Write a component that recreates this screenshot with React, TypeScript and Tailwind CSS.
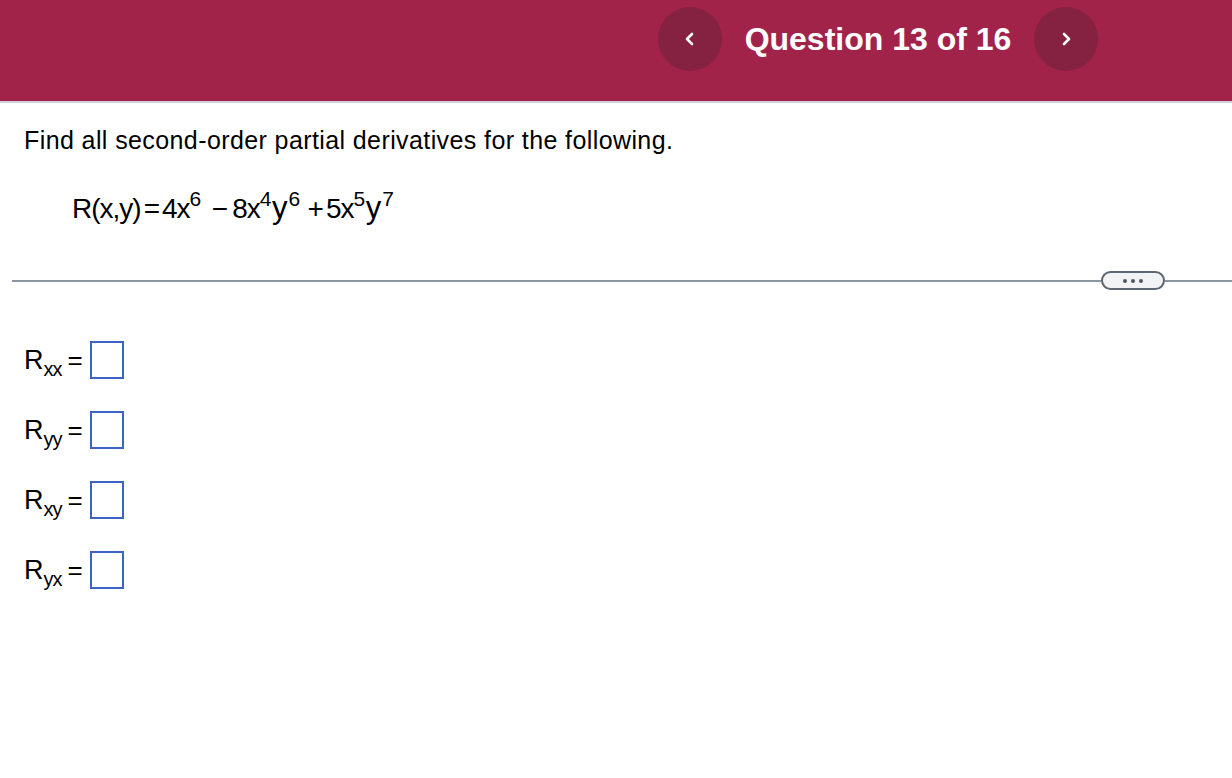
import React from 'react';

const font = { fontFamily: '"Liberation Sans", Arial, sans-serif' };

const rows = [{ sub: 'xx' }, { sub: 'yy' }, { sub: 'xy' }, { sub: 'yx' }];

const Sup: React.FC<{ children: React.ReactNode }> = ({ children }) => (
  <span className="relative -top-[12px] text-[21px] tracking-[-0.5px]">{children}</span>
);

const Y = () => <span className="text-[31px] ml-[1px] mr-[1px] tracking-normal">y</span>;

export default function App() {
  return (
    <div className="min-h-screen w-[1232px] bg-white text-black" style={font}>
      {/* header */}
      <div className="h-[103px] bg-[#a2234a] border-b-2 border-[#ccd1dc] flex items-start justify-end pr-[134px] pt-[7px]">
        <div className="flex items-center">
          <button className="w-[64px] h-[64px] rounded-full bg-[#852141] flex items-center justify-center">
            <svg width="12" height="14" viewBox="0 0 12 14">
              <path d="M8 2 L3 7 L8 12" stroke="white" strokeWidth="2.6" fill="none" strokeLinecap="round" strokeLinejoin="round" />
            </svg>
          </button>
          <div className="w-[312px] text-center text-white font-bold text-[32px] leading-none">Question 13 of 16</div>
          <button className="w-[64px] h-[64px] rounded-full bg-[#852141] flex items-center justify-center">
            <svg width="12" height="14" viewBox="0 0 12 14">
              <path d="M4 2 L9 7 L4 12" stroke="white" strokeWidth="2.6" fill="none" strokeLinecap="round" strokeLinejoin="round" />
            </svg>
          </button>
        </div>
      </div>

      {/* question */}
      <div className="pl-[24px] pt-[23px]">
        <p className="text-[25px] leading-[28px] tracking-[0.4px]">Find all second-order partial derivatives for the following.</p>
        <div className="pl-[48px] mt-[40px] text-[28px] leading-[28px] tracking-[-1px] whitespace-nowrap">
          R(x,y)<span className="mx-[3px]">=</span>4x<Sup>6</Sup>
          <span className="ml-[11px] mr-[5px]">−</span>8x<Sup>4</Sup><Y /><Sup>6</Sup>
          <span className="ml-[8px] mr-[3px]">+</span>5x<Sup>5</Sup><Y /><Sup>7</Sup>
        </div>
      </div>

      {/* divider */}
      <div className="mt-[46px] pl-[12px] flex items-center">
        <div className="flex-1 h-[2px] bg-[#8b95a1]" />
        <div className="w-[64px] h-[19px] rounded-full border-2 border-[#5d6773] bg-[#f2f3f5] flex items-center justify-center gap-[4px]">
          <span className="w-[4px] h-[4px] rounded-full bg-[#4b5563]" />
          <span className="w-[4px] h-[4px] rounded-full bg-[#4b5563]" />
          <span className="w-[4px] h-[4px] rounded-full bg-[#4b5563]" />
        </div>
        <div className="w-[67px] h-[2px] bg-[#8b95a1]" />
      </div>

      {/* answers */}
      <div className="pl-[24px] pt-[51px] flex flex-col gap-[32px]">
        {rows.map((r) => (
          <div key={r.sub} className="flex items-center h-[38px]">
            <span className="text-[27px] leading-none">R</span>
            <span className="text-[20px] leading-none relative top-[9px] tracking-[-1px]">{r.sub}</span>
            <span className="text-[26px] leading-none ml-[6px] mr-[7px]">=</span>
            <div className="w-[34px] h-[38px] border-2 border-[#3d63c9] bg-white" />
          </div>
        ))}
      </div>
    </div>
  );
}
